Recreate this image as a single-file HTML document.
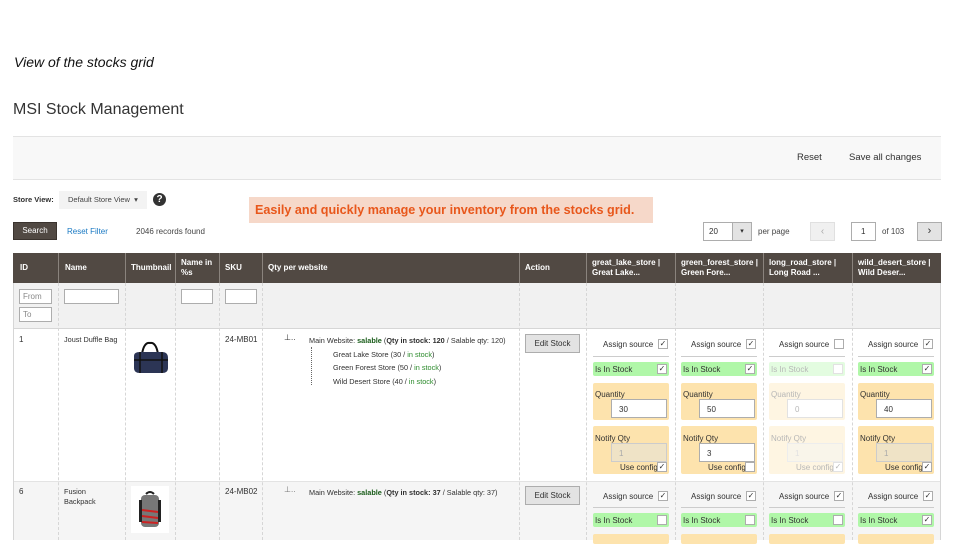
<!DOCTYPE html>
<html><head><meta charset="utf-8"><style>
*{margin:0;padding:0;box-sizing:border-box}
body{width:960px;height:540px;background:#fff;font-family:"Liberation Sans",sans-serif;color:#303030;position:relative;overflow:hidden}
.a{position:absolute;white-space:nowrap}
.s{font-size:8px}
.hd{background:#514943;color:#fff;font-weight:bold;font-size:8px}
.vl{position:absolute;border-left:1px dashed #d6d6d6}
.hv{position:absolute;top:253px;height:30px;border-left:1px solid #8a837d}
.inp{position:absolute;background:#fff;border:1px solid #adadad}
.cb{position:absolute;width:10px;height:10px;border:1px solid #adadad;background:#fff;font-size:8px;line-height:8px;text-align:center;color:#333}
.g{position:absolute;background:#b0f7a8;border-radius:2px}
.o{position:absolute;background:#fde3ad;border-radius:2px}
.q{font-size:7.3px}
</style></head><body>
<div class="a" style="left:14px;top:54px;font-size:14px;font-style:italic;color:#111">View of the stocks grid</div>
<div class="a" style="left:13px;top:101px;font-size:16px;color:#333">MSI Stock Management</div>
<div class="a" style="left:13px;top:136px;width:928px;height:44px;background:#f8f8f8;border-top:1px solid #e3e3e3;border-bottom:1px solid #e3e3e3"></div>
<div class="a" style="left:797px;top:152px;font-size:9.5px">Reset</div>
<div class="a" style="left:849px;top:152px;font-size:9.5px">Save all changes</div>

<div class="a" style="left:13px;top:195px;font-size:7.5px;font-weight:bold">Store View:</div>
<div class="a" style="left:59px;top:191px;width:88px;height:18px;background:#f3f3f3"></div>
<div class="a" style="left:68px;top:195px;font-size:7.5px;color:#444">Default Store View &nbsp;▾</div>
<div class="a" style="left:153px;top:193px;width:13px;height:13px;border-radius:50%;background:#333;color:#fff;font-size:10px;font-weight:bold;text-align:center;line-height:13px">?</div>
<div class="a" style="left:249px;top:197px;width:404px;height:26px;background:#f6d8c9"></div>
<div class="a" style="left:255px;top:203px;font-size:12.6px;font-weight:bold;color:#e8571b">Easily and quickly manage your inventory from the stocks grid.</div>

<div class="a" style="left:13px;top:222px;width:44px;height:18px;background:#514943;border:1px solid #3a332e;color:#fff;font-size:8px;text-align:center;line-height:16px">Search</div>
<div class="a" style="left:67px;top:227px;font-size:8px;color:#1979c3">Reset Filter</div>
<div class="a" style="left:136px;top:227px;font-size:8px;color:#444">2046 records found</div>

<div class="inp" style="left:703px;top:222px;width:49px;height:19px;border-color:#adadad"></div>
<div class="a" style="left:709px;top:227px;font-size:8px">20</div>
<div class="a" style="left:732px;top:223px;width:19px;height:17px;background:#e3e3e3;border-left:1px solid #adadad;font-size:7px;text-align:center;line-height:17px">▾</div>
<div class="a" style="left:758px;top:227px;font-size:8px;color:#444">per page</div>
<div class="a" style="left:810px;top:222px;width:25px;height:19px;background:#f0f0f0;border:1px solid #e0e0e0;color:#aaa;font-size:10px;text-align:center;line-height:17px">‹</div>
<div class="inp" style="left:851px;top:222px;width:25px;height:19px"></div>
<div class="a" style="left:861px;top:227px;font-size:8px">1</div>
<div class="a" style="left:882px;top:227px;font-size:8px;color:#444">of 103</div>
<div class="a" style="left:917px;top:222px;width:25px;height:19px;background:#e3e3e3;border:1px solid #adadad;font-size:11px;text-align:center;line-height:16px">›</div>

<div class="a hd" style="left:13px;top:253px;width:928px;height:30px"></div>
<div class="hv" style="left:58px"></div><div class="hv" style="left:125px"></div><div class="hv" style="left:175px"></div><div class="hv" style="left:219px"></div><div class="hv" style="left:262px"></div><div class="hv" style="left:519px"></div><div class="hv" style="left:586px"></div><div class="hv" style="left:675px"></div><div class="hv" style="left:763px"></div><div class="hv" style="left:852px"></div>
<div class="a hd" style="left:20px;top:263px;background:none">ID</div>
<div class="a hd" style="left:65px;top:263px;background:none">Name</div>
<div class="a hd" style="left:131px;top:263px;background:none">Thumbnail</div>
<div class="a hd" style="left:181px;top:258px;background:none;line-height:10px">Name in<br>%s</div>
<div class="a hd" style="left:225px;top:263px;background:none">SKU</div>
<div class="a hd" style="left:268px;top:263px;background:none">Qty per website</div>
<div class="a hd" style="left:525px;top:263px;background:none">Action</div>
<div class="a hd" style="left:592px;top:258px;background:none;line-height:10px">great_lake_store |<br>Great Lake...</div>
<div class="a hd" style="left:681px;top:258px;background:none;line-height:10px">green_forest_store |<br>Green Fore...</div>
<div class="a hd" style="left:769px;top:258px;background:none;line-height:10px">long_road_store |<br>Long Road ...</div>
<div class="a hd" style="left:858px;top:258px;background:none;line-height:10px">wild_desert_store |<br>Wild Deser...</div>

<div class="a" style="left:13px;top:283px;width:928px;height:46px;background:#f1f1f1;border-bottom:1px solid #d6d6d6"></div>
<div class="a" style="left:13px;top:481px;width:928px;height:59px;background:#f5f5f5;border-top:1px solid #e3e3e3"></div>
<div class="a" style="left:13px;top:283px;height:257px;border-left:1px solid #d6d6d6"></div>
<div class="a" style="left:940px;top:283px;height:257px;border-left:1px solid #d6d6d6"></div>
<div class="vl" style="left:58px;top:283px;height:257px"></div><div class="vl" style="left:125px;top:283px;height:257px"></div><div class="vl" style="left:175px;top:283px;height:257px"></div><div class="vl" style="left:219px;top:283px;height:257px"></div><div class="vl" style="left:262px;top:283px;height:257px"></div><div class="vl" style="left:519px;top:283px;height:257px"></div><div class="vl" style="left:586px;top:283px;height:257px"></div><div class="vl" style="left:675px;top:283px;height:257px"></div><div class="vl" style="left:763px;top:283px;height:257px"></div><div class="vl" style="left:852px;top:283px;height:257px"></div>
<div class="inp" style="left:19px;top:289px;width:33px;height:15px"></div><div class="a s" style="left:23px;top:292px;color:#888">From</div>
<div class="inp" style="left:19px;top:307px;width:33px;height:15px"></div><div class="a s" style="left:23px;top:310px;color:#888">To</div>
<div class="inp" style="left:64px;top:289px;width:55px;height:15px"></div>
<div class="inp" style="left:181px;top:289px;width:32px;height:15px"></div>
<div class="inp" style="left:225px;top:289px;width:32px;height:15px"></div>

<div class="a s" style="left:19px;top:335px;color:#333">1</div>
<div class="a q" style="left:64px;top:335px">Joust Duffle Bag</div>
<svg class="a" style="left:130px;top:340px" width="42" height="36" viewBox="0 0 42 36"><path d="M12 14 Q14 2 20 3 Q26 2 28 14" fill="none" stroke="#111" stroke-width="2"/><path d="M4 16 Q4 12 10 12 L32 12 Q38 12 38 18 L38 28 Q38 33 32 33 L10 33 Q4 33 4 28Z" fill="#2c3555"/><path d="M10 12 L10 33 M32 12 L32 33 M4 20 L38 20" stroke="#111" stroke-width="1.5"/></svg>
<div class="a s" style="left:225px;top:335px">24-MB01</div>
<div class="a s" style="left:284px;top:333px">⊥..</div>
<div class="a q" style="left:309px;top:336px">Main Website: <b style="color:#185b18">salable</b> (<b>Qty in stock: 120</b> / Salable qty: 120)</div>
<div class="a" style="left:311px;top:347px;width:6px;height:38px;border-left:1px dotted #666"></div>
<div class="a q" style="left:333px;top:350px">Great Lake Store (30 / <span style="color:#2a8a2a">in stock</span>)</div>
<div class="a q" style="left:333px;top:363px">Green Forest Store (50 / <span style="color:#2a8a2a">in stock</span>)</div>
<div class="a q" style="left:333px;top:377px">Wild Desert Store (40 / <span style="color:#2a8a2a">in stock</span>)</div>
<div class="a" style="left:525px;top:334px;width:55px;height:19px;background:#e3e3e3;border:1px solid #adadad;font-size:8px;text-align:center;line-height:17px">Edit Stock</div>

<div class="a s" style="left:19px;top:487px">6</div>
<div class="a q" style="left:64px;top:487px;line-height:10px;white-space:normal;width:50px">Fusion Backpack</div>
<div class="a" style="left:131px;top:486px;width:38px;height:47px;background:#fff"></div>
<svg class="a" style="left:136px;top:490px" width="28" height="40" viewBox="0 0 28 40"><path d="M10 4 Q14 0 18 4" fill="none" stroke="#222" stroke-width="2"/><rect x="5" y="5" width="18" height="32" rx="4" fill="#777"/><path d="M6 20 L22 22 M6 26 L22 28 M6 32 L22 33" stroke="#c22" stroke-width="2"/><rect x="3" y="10" width="3" height="22" fill="#222"/><rect x="22" y="10" width="3" height="22" fill="#222"/></svg>
<div class="a s" style="left:225px;top:487px">24-MB02</div>
<div class="a s" style="left:284px;top:485px;color:#777">⊥..</div>
<div class="a q" style="left:309px;top:488px">Main Website: <b style="color:#185b18">salable</b> (<b>Qty in stock: 37</b> / Salable qty: 37)</div>
<div class="a" style="left:525px;top:486px;width:55px;height:19px;background:#e3e3e3;border:1px solid #adadad;font-size:8px;text-align:center;line-height:17px">Edit Stock</div>

<div id="w"></div>
<script>
var xs=[593,681,769,858];
var r1=[{c:1,s:1,q:"30",n:"1",u:1},{c:1,s:1,q:"50",n:"3",u:0},{c:0,s:0,q:"0",n:"1",u:1,f:1},{c:1,s:1,q:"40",n:"1",u:1}];
var r2s=[0,0,0,1];var h="";
for(var i=0;i<4;i++){var x=xs[i],d=r1[i],op=d.f?"opacity:.35;":"";
h+='<div class="a s" style="left:'+(x+10)+'px;top:340px">Assign source</div>';
h+='<div class="cb" style="left:'+(x+65)+'px;top:339px">'+(d.c?'✓':'')+'</div>';
h+='<div class="a" style="left:'+x+'px;top:356px;width:76px;border-top:1px solid #ccc"></div>';
h+='<div style="position:absolute;left:0;top:0;'+op+'">';
h+='<div class="g" style="left:'+x+'px;top:362px;width:76px;height:14px"></div><div class="a s" style="left:'+(x+2)+'px;top:365px">Is In Stock</div><div class="cb" style="left:'+(x+64)+'px;top:364px">'+(d.s?'✓':'')+'</div>';
h+='<div class="o" style="left:'+x+'px;top:383px;width:76px;height:37px"></div><div class="a s" style="left:'+(x+2)+'px;top:390px">Quantity</div><div class="inp" style="left:'+(x+18)+'px;top:399px;width:56px;height:19px"></div><div class="a s" style="left:'+(x+26)+'px;top:405px">'+d.q+'</div>';
h+='<div class="o" style="left:'+x+'px;top:426px;width:76px;height:48px"></div><div class="a s" style="left:'+(x+2)+'px;top:434px">Notify Qty</div><div class="inp" style="left:'+(x+18)+'px;top:443px;width:56px;height:19px;'+(d.u?'background:#efe3c6;border-color:#ccc;':'')+'"></div><div class="a s" style="left:'+(x+26)+'px;top:449px;color:'+(d.u?'#aaa':'#333')+'">'+d.n+'</div>';
h+='<div class="a s" style="left:'+(x+27)+'px;top:463px">Use config</div><div class="cb" style="left:'+(x+64)+'px;top:462px">'+(d.u?'✓':'')+'</div></div>';
h+='<div class="a s" style="left:'+(x+10)+'px;top:492px">Assign source</div><div class="cb" style="left:'+(x+65)+'px;top:491px">✓</div>';
h+='<div class="a" style="left:'+x+'px;top:507px;width:76px;border-top:1px solid #ccc"></div>';
h+='<div class="g" style="left:'+x+'px;top:513px;width:76px;height:14px"></div><div class="a s" style="left:'+(x+2)+'px;top:516px">Is In Stock</div><div class="cb" style="left:'+(x+64)+'px;top:515px">'+(r2s[i]?'✓':'')+'</div>';
h+='<div class="o" style="left:'+x+'px;top:534px;width:76px;height:10px"></div>';}
document.getElementById('w').innerHTML=h;
</script>
</body></html>
